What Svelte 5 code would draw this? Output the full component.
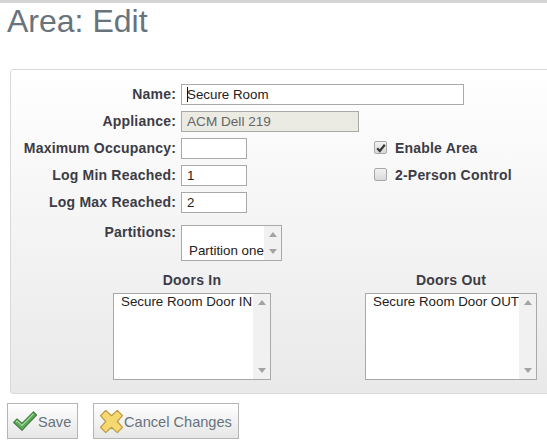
<script>
  const fields = [
    { label: 'Log Min Reached:', value: '1' },
    { label: 'Log Max Reached:', value: '2' }
  ];
</script>

<div class="page">
  <h1>Area: Edit</h1>
  <section class="panel">
    <div class="row">
      <span class="label">Name:</span>
      <div class="input wide focus"><i class="caret"></i>Secure Room</div>
    </div>
    <div class="row">
      <span class="label">Appliance:</span>
      <div class="input disabled">ACM Dell 219</div>
    </div>
    <div class="split">
      <div class="stack">
        <div class="row">
          <span class="label">Maximum Occupancy:</span>
          <div class="input small"></div>
        </div>
        {#each fields as f}
          <div class="row">
            <span class="label">{f.label}</span>
            <div class="input small">{f.value}</div>
          </div>
        {/each}
      </div>
      <div class="checks">
        <div class="check">
          <span class="box">
            <svg viewBox="0 0 12 12" width="12" height="12"><path d="M2.2 6.3 4.8 9 9.8 2.8" fill="none" stroke="#3a3a3a" stroke-width="2.2"/></svg>
          </span>
          <span class="check-label">Enable Area</span>
        </div>
        <div class="check">
          <span class="box"></span>
          <span class="check-label">2-Person Control</span>
        </div>
      </div>
    </div>
    <div class="row partitions">
      <span class="label">Partitions:</span>
      <div class="list part">
        <div class="items"><div class="opt">Partition one</div></div>
        <div class="bar"><i class="up"></i><i class="down"></i></div>
      </div>
    </div>
    <div class="doors">
      <div class="door in">
        <div class="door-title">Doors In</div>
        <div class="list door-list">
          <div class="items top"><div class="opt">Secure Room Door IN</div></div>
          <div class="bar"><i class="up"></i><i class="down"></i></div>
        </div>
      </div>
      <div class="door out">
        <div class="door-title">Doors Out</div>
        <div class="list door-list">
          <div class="items top"><div class="opt">Secure Room Door OUT</div></div>
          <div class="bar"><i class="up"></i><i class="down"></i></div>
        </div>
      </div>
    </div>
  </section>
  <div class="actions">
    <button class="save">
      <svg viewBox="0 0 24 20" width="24" height="20">
        <path d="M.7 11.5 4 8 9 12.5 20.5.8 23.5 4 9 19.3Z" fill="#5fa85a" stroke="#3f7f3f" stroke-width="1.1" stroke-linejoin="round"/>
        <path d="M3 11 4 9.8 9 14.4 20.5 2.6" fill="none" stroke="#a6d8a0" stroke-width="1.2"/>
      </svg>
      <span>Save</span>
    </button>
    <button class="cancel">
      <svg viewBox="0 0 26 26" width="25" height="25">
        <path d="M7 1.5 13 7 19 1.5 24.5 7 19 13 24.5 19 19 24.5 13 19 7 24.5 1.5 19 7 13 1.5 7Z" fill="#f5d870" stroke="#bd9a45" stroke-width="1.2" stroke-linejoin="round"/>
      </svg>
      <span>Cancel Changes</span>
    </button>
  </div>
</div>

<style>
  :global(body) {
    margin: 0;
    background: #fff;
    font-family: "Liberation Sans", Arial, sans-serif;
  }
  .page {
    width: 547px;
    height: 442px;
    overflow: hidden;
    box-sizing: border-box;
    border-top: 3px solid #d4d4d4;
  }
  h1 {
    margin: 0;
    padding: 0 0 0 7px;
    height: 66px;
    font-size: 32px;
    line-height: 36px;
    font-weight: 400;
    color: #68737c;
  }
  .panel {
    margin-left: 10px;
    width: 545px;
    height: 325px;
    box-sizing: border-box;
    border: 1px solid #d9d9d9;
    border-radius: 3px;
    background: linear-gradient(#fff, #e9e9e9);
    padding: 14px 0 0;
    font-size: 14px;
    color: #333;
  }
  .row {
    display: flex;
    align-items: center;
    gap: 5px;
    height: 21px;
    margin-bottom: 6px;
  }
  .label {
    width: 165px;
    flex: none;
    text-align: right;
    font-weight: 700;
    letter-spacing: 0.2px;
    color: #3c3c46;
    position: relative;
    top: -1px;
  }
  .input {
    box-sizing: border-box;
    height: 21px;
    width: 178px;
    border: 1px solid #a9a9a9;
    background: #fff;
    padding: 0 5px;
    font-size: 13.33px;
    line-height: 19px;
    color: #222;
    white-space: nowrap;
  }
  .wide { width: 283px; }
  .focus { position: relative; }
  .caret {
    display: inline-block;
    width: 1px;
    height: 15px;
    background: #111;
    vertical-align: -3px;
    margin-right: -1px;
  }
  .disabled {
    background: #ebebe4;
    color: #666;
    font-size: 13.6px;
  }
  .small { width: 66px; }
  .split {
    display: flex;
  }
  .stack { width: 363px; flex: none; }
  .checks { margin-top: -1px; }
  .check {
    display: flex;
    align-items: center;
    height: 21px;
    margin-bottom: 6px;
  }
  .box {
    box-sizing: border-box;
    width: 13px;
    height: 13px;
    border: 1px solid #a8a8a8;
    border-radius: 2px;
    background: linear-gradient(#f2f2f2, #d9d9d9);
    display: flex;
    align-items: center;
    justify-content: center;
    margin-right: 8px;
    flex: none;
  }
  .box svg { flex: none; }
  .check-label {
    font-weight: 700;
    letter-spacing: 0.2px;
    color: #3c3c46;
  }
  .partitions {
    align-items: flex-start;
    margin: 6px 0 0;
    height: 37px;
  }
  .list {
    box-sizing: border-box;
    border: 1px solid #a9a9a9;
    background: #fff;
    display: flex;
    font-size: 13.33px;
    color: #222;
  }
  .part { width: 101px; height: 36px; }
  .items {
    flex: 1;
    min-width: 0;
    overflow: hidden;
    display: flex;
    align-items: flex-end;
    padding-left: 7px;
    white-space: nowrap;
    padding-bottom: 2px;
  }
  .items.top { align-items: flex-start; padding: 0 0 0 7px; }
  .bar {
    width: 17px;
    flex: none;
    background: #f1f1f1;
    display: flex;
    flex-direction: column;
    justify-content: space-between;
    align-items: center;
    padding: 6px 0;
    box-sizing: border-box;
  }
  .up, .down {
    width: 0;
    height: 0;
    border-left: 4px solid transparent;
    border-right: 4px solid transparent;
  }
  .up { border-bottom: 5px solid #a3a3a3; }
  .down { border-top: 5px solid #a3a3a3; }
  .doors {
    display: flex;
    margin-top: 10px;
  }
  .door { display: flex; flex-direction: column; }
  .door.in { margin-left: 102px; width: 158px; }
  .door.out { margin-left: 94px; width: 172px; }
  .door-title {
    text-align: center;
    font-weight: 700;
    letter-spacing: 0.2px;
    color: #3c3c46;
    line-height: 16px;
    margin-bottom: 5px;
  }
  .door-list { height: 87px; }
  .actions {
    display: flex;
    gap: 15px;
    margin: 9px 0 0 7px;
  }
  button {
    box-sizing: border-box;
    height: 36px;
    display: flex;
    align-items: center;
    border: 1px solid #b5b5b5;
    background: linear-gradient(#fff, #e6e6e6);
    color: #67727c;
    font: 14.6px "Liberation Sans", Arial, sans-serif;
    padding: 0 5px;
    white-space: nowrap;
  }
  button span { position: relative; top: 1px; }
  .save { width: 71px; gap: 1px; }
  .cancel { width: 146px; padding-left: 5px; }
</style>
